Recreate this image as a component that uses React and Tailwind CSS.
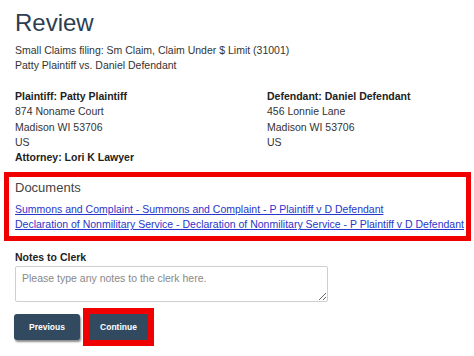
export default function App() {
  return (
    <div className="w-[474px] h-[356px] overflow-hidden bg-white text-[#333] font-['Liberation_Sans',Arial,sans-serif]">
      <h1 className="pl-[15px] pt-[9px] text-[24px] leading-[28px] font-normal text-[#2c3e50]">Review</h1>

      <div className="pl-[15px] mt-[6px] text-[10.5px] leading-[15px]">
        <div>Small Claims filing: Sm Claim, Claim Under $ Limit (31001)</div>
        <div>Patty Plaintiff vs. Daniel Defendant</div>
      </div>

      <div className="pl-[15px] mt-[16px] flex text-[10.5px] leading-[15.3px]">
        <div className="w-[252px]">
          <div className="font-bold text-[#222]">Plaintiff: Patty Plaintiff</div>
          <div>874 Noname Court</div>
          <div>Madison WI 53706</div>
          <div>US</div>
          <div className="font-bold text-[#222]">Attorney: Lori K Lawyer</div>
        </div>
        <div>
          <div className="font-bold text-[#222]">Defendant: Daniel Defendant</div>
          <div>456 Lonnie Lane</div>
          <div>Madison WI 53706</div>
          <div>US</div>
        </div>
      </div>

      <div className="ml-[4px] mt-[7px] w-[467px] border-[5px] border-[#f00000] pl-[6px] pt-[3px] pb-[4px]">
        <div className="text-[13px] leading-[16px] text-[#444]">Documents</div>
        <div className="mt-[6px] text-[10.5px] leading-[15px]">
          <div>
            <a href="#" className="text-[#2a35c9] underline">Summons and Complaint - Summons and Complaint - P Plaintiff v D Defendant</a>
          </div>
          <div>
            <a href="#" className="text-[#2a35c9] underline">Declaration of Nonmilitary Service - Declaration of Nonmilitary Service - P Plaintiff v D Defendant</a>
          </div>
        </div>
      </div>

      <div className="pl-[15px] mt-[9px]">
        <div className="text-[10.5px] leading-[15px] font-bold text-[#222]">Notes to Clerk</div>
        <textarea
          className="mt-[1px] block w-[313px] h-[36px] border border-[#cfcfcf] rounded-[2px] px-[6px] pt-[4px] text-[10.5px] leading-[15px] text-[#333] placeholder:text-[#888] outline-none font-['Liberation_Sans',Arial,sans-serif]"
          placeholder="Please type any notes to the clerk here."
        />
      </div>

      <div className="mt-[6px] flex items-center pl-[14px]">
        <button className="w-[66px] h-[26px] rounded-[3px] bg-[#324a5f] text-white text-[8.5px] font-bold shadow-[1px_2px_2px_rgba(0,0,0,0.45)]">
          Previous
        </button>
        <div className="ml-[3px] border-[6px] border-[#f00000]">
          <button className="block w-[59px] h-[26px] bg-[#324a5f] text-white text-[8.5px] font-bold">
            Continue
          </button>
        </div>
      </div>
    </div>
  );
}
